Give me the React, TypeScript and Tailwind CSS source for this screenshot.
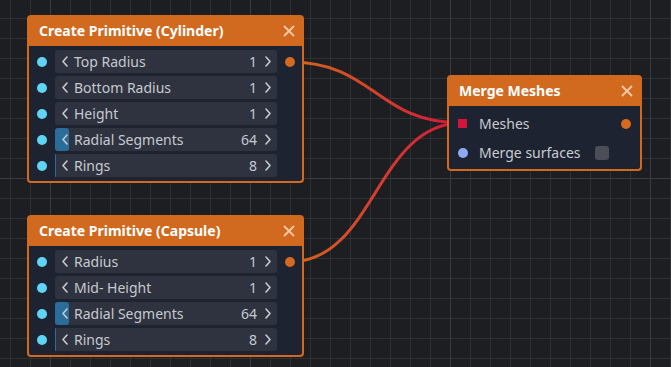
import type { ReactNode } from 'react';

type Field = { label: string; value: string; fill?: number };

const cylinderFields: Field[] = [
  { label: 'Top Radius', value: '1' },
  { label: 'Bottom Radius', value: '1' },
  { label: 'Height', value: '1' },
  { label: 'Radial Segments', value: '64', fill: 14 },
  { label: 'Rings', value: '8', fill: 1 },
];

const capsuleFields: Field[] = [
  { label: 'Radius', value: '1' },
  { label: 'Mid- Height', value: '1' },
  { label: 'Radial Segments', value: '64', fill: 14 },
  { label: 'Rings', value: '8', fill: 1 },
];

function Chevron({ dir, className }: { dir: 'left' | 'right'; className?: string }) {
  return (
    <svg width="6" height="11" viewBox="0 0 6 11" className={className}>
      <path
        d={dir === 'left' ? 'M5 1 L1 5.5 L5 10' : 'M1 1 L5 5.5 L1 10'}
        fill="none"
        stroke="#c6c9d0"
        strokeWidth="1.6"
        strokeLinecap="round"
        strokeLinejoin="round"
      />
    </svg>
  );
}

function CloseIcon() {
  return (
    <svg width="12" height="12" viewBox="0 0 12 12">
      <path d="M1.5 1.5 L10.5 10.5 M10.5 1.5 L1.5 10.5" stroke="#f2c9a8" strokeWidth="1.8" strokeLinecap="round" />
    </svg>
  );
}

function Header({ title }: { title: string }) {
  return (
    <div className="flex h-[31px] items-center justify-between rounded-t-[4px] bg-[#d1691f] pl-[12px] pr-[9px]">
      <span className="text-[14px] font-bold text-white">{title}</span>
      <CloseIcon />
    </div>
  );
}

function Port({ color }: { color: string }) {
  return <div className={`h-[10px] w-[10px] rounded-full ${color}`} />;
}

function SpinField({ field }: { field: Field }) {
  return (
    <div className="relative flex h-[23px] w-[222px] items-center rounded-[3px] bg-[#2f333f] text-[14px] text-[#c6c9d0]">
      {field.fill ? (
        <div className="absolute inset-y-0 left-0 rounded-[3px] bg-[#2a6d9a]" style={{ width: field.fill }} />
      ) : null}
      <Chevron dir="left" className="relative ml-[7px]" />
      <span className="relative ml-[6px] flex-1">{field.label}</span>
      <span className="relative">{field.value}</span>
      <Chevron dir="right" className="relative ml-[8px] mr-[6px]" />
    </div>
  );
}

function PrimitiveNode({ title, fields, className }: { title: string; fields: Field[]; className: string }) {
  return (
    <div className={`absolute w-[277px] ${className}`}>
      <Header title={title} />
      <div className="flex flex-col gap-[3px] rounded-b-[4px] border-2 border-t-0 border-[#d1691f] bg-[#1e2331] pb-[4px] pt-[4px]">
        {fields.map((f, i) => (
          <div key={f.label} className="flex items-center">
            <div className="flex w-[26px] justify-center">
              <Port color="bg-[#5fd5f5]" />
            </div>
            <SpinField field={f} />
            <div className="flex w-[25px] justify-center">
              {i === 0 && <Port color="bg-[#d5691e]" />}
            </div>
          </div>
        ))}
      </div>
    </div>
  );
}

function MergeRow({ port, label, trailing }: { port: ReactNode; label: string; trailing?: ReactNode }) {
  return (
    <div className="flex h-[23px] items-center">
      <div className="flex w-[27px] justify-center">{port}</div>
      <span className="flex-1 pl-[3px] text-[14px] text-[#c8cbd1]">{label}</span>
      {trailing}
    </div>
  );
}

function MergeNode() {
  return (
    <div className="absolute left-[447px] top-[75px] w-[195px]">
      <Header title="Merge Meshes" />
      <div className="flex flex-col gap-[6px] rounded-b-[4px] border-2 border-t-0 border-[#d1691f] bg-[#1e2331] pb-[5px] pt-[6px]">
        <MergeRow
          port={<div className="h-[9px] w-[9px] bg-[#d4153b]" />}
          label="Meshes"
          trailing={
            <div className="flex w-[29px] justify-center">
              <Port color="bg-[#d5691e]" />
            </div>
          }
        />
        <MergeRow
          port={<Port color="bg-[#8eaaf5]" />}
          label="Merge surfaces"
          trailing={
            <div className="flex items-center">
              <div className="h-[14px] w-[14px] rounded-[3px] bg-[#4b4e57]" />
              <div className="w-[31px]" />
            </div>
          }
        />
      </div>
    </div>
  );
}

function Wires() {
  return (
    <svg className="absolute inset-0" width="671" height="367">
      <defs>
        <linearGradient id="w1" gradientUnits="userSpaceOnUse" x1="289" y1="0" x2="462" y2="0">
          <stop offset="0" stopColor="#d5691e" />
          <stop offset="1" stopColor="#d4153b" />
        </linearGradient>
      </defs>
      <path d="M289 62 C375 62 376 123 462 123" fill="none" stroke="url(#w1)" strokeWidth="3" />
      <path d="M289 262 C375 262 376 123 462 123" fill="none" stroke="url(#w1)" strokeWidth="3" />
    </svg>
  );
}

export default function App() {
  return (
    <div className="relative h-[367px] w-[671px] overflow-hidden bg-[#1d1e22] font-['Noto_Sans',sans-serif]">
      <div className="absolute inset-0 bg-[linear-gradient(to_right,#2f3034_1px,transparent_1px),linear-gradient(to_bottom,#2f3034_1px,transparent_1px)] bg-[size:20px_20px] bg-[position:10px_18px]" />
      <div className="absolute inset-0 bg-[linear-gradient(to_right,#3a3b40_1px,transparent_1px),linear-gradient(to_bottom,#3a3b40_1px,transparent_1px)] bg-[size:200px_200px] bg-[position:50px_178px]" />
      <Wires />
      <PrimitiveNode title="Create Primitive (Cylinder)" fields={cylinderFields} className="left-[27px] top-[15px]" />
      <PrimitiveNode title="Create Primitive (Capsule)" fields={capsuleFields} className="left-[27px] top-[215px]" />
      <MergeNode />
    </div>
  );
}
